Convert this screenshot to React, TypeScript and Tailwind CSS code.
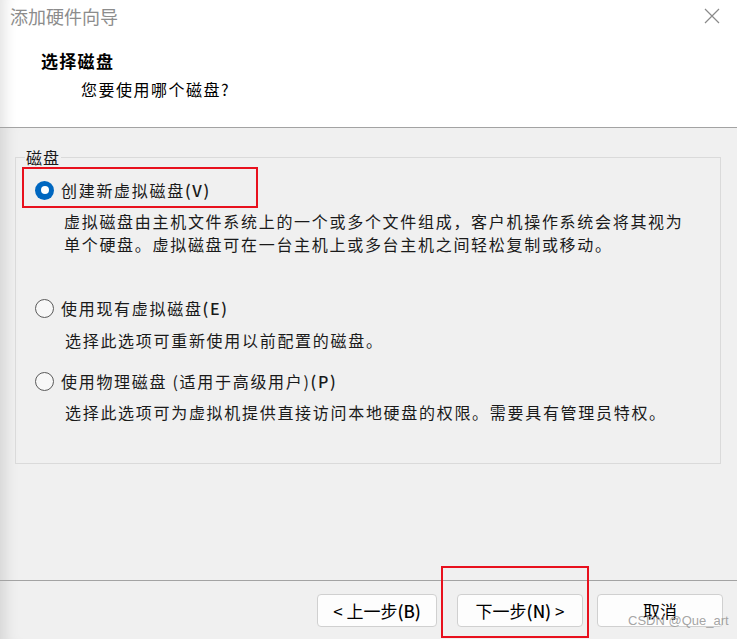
import React from "react";

const font = "font-['Noto_Sans_CJK_SC','Microsoft_YaHei',sans-serif]";

function Radio({ checked }: { checked?: boolean }) {
  if (checked) {
    return (
      <span className="w-[19px] h-[19px] rounded-full bg-[#0067c0] flex items-center justify-center shrink-0">
        <span className="w-[8px] h-[8px] rounded-full bg-white" />
      </span>
    );
  }
  return (
    <span className="w-[19px] h-[19px] rounded-full border border-[#5a5a5a] bg-[#f7f7f7] shrink-0" />
  );
}

export default function App() {
  return (
    <div
      className={`relative w-[737px] h-[639px] flex flex-col overflow-hidden bg-[#f0f0f0] text-[#1a1a1a] ${font}`}
    >
      {/* header */}
      <div className="h-[128px] bg-white border-b border-[#a3a3a3] shadow-[inset_16px_0_14px_-12px_rgba(0,0,0,0.12)]">
        <div className="flex items-center justify-between h-[30px] pl-[10px] pr-[16px] pt-[2px]">
          <span className="text-[18px] text-[#8c8c8c] leading-[24px]">添加硬件向导</span>
          <svg width="16" height="16" viewBox="0 0 16 16" className="mr-[1px]">
            <path d="M1 1 L15 15 M15 1 L1 15" stroke="#8a8a8a" strokeWidth="1.2" />
          </svg>
        </div>
        <div className="pl-[41px] pt-[19px] text-[17px] font-bold leading-[24px] tracking-[1.3px] text-black">
          选择磁盘
        </div>
        <div className="pl-[81px] pt-[4px] text-[16px] leading-[24px] tracking-[1.5px] text-black">
          您要使用哪个磁盘?
        </div>
      </div>

      {/* body */}
      <div className="flex-1 flex flex-col shadow-[inset_18px_0_16px_-14px_rgba(0,0,0,0.13)]">
        <div className="h-[452px] pt-[29px] pl-[15px] pr-[16px]">
          <div className="relative h-[307px] border border-[#dadada] pl-[19px] pt-[20px]">
            <span className="absolute left-[9px] -top-[13px] px-[1px] bg-[#f0f0f0] text-[16px] leading-[24px] tracking-[1px]">
              磁盘
            </span>

            <div className="h-[24px] flex items-center gap-[7px] text-[16px] tracking-[1.7px]">
              <Radio checked />
              <span>创建新虚拟磁盘<span className="font-medium">(V)</span></span>
            </div>
            <div className="mt-[8px] pl-[29px] text-[16px] leading-[23px] tracking-[1.7px]">
              虚拟磁盘由主机文件系统上的一个或多个文件组成，客户机操作系统会将其视为
              <br />
              单个硬盘。虚拟磁盘可在一台主机上或多台主机之间轻松复制或移动。
            </div>

            <div className="mt-[40px] h-[24px] flex items-center gap-[7px] text-[16px] tracking-[1.7px]">
              <Radio />
              <span>使用现有虚拟磁盘<span className="font-medium">(E)</span></span>
            </div>
            <div className="mt-[9px] pl-[30px] text-[16px] leading-[23px] tracking-[1.7px]">
              选择此选项可重新使用以前配置的磁盘。
            </div>

            <div className="mt-[17px] h-[24px] flex items-center gap-[7px] text-[16px] tracking-[1.7px]">
              <Radio />
              <span>使用物理磁盘 (适用于高级用户)<span className="font-medium">(P)</span></span>
            </div>
            <div className="mt-[8px] pl-[30px] text-[16px] leading-[23px] tracking-[1.7px]">
              选择此选项可为虚拟机提供直接访问本地硬盘的权限。需要具有管理员特权。
            </div>
          </div>
        </div>

        <div className="border-t border-[#a3a3a3] flex-1 flex justify-end items-start pt-[13px] pr-[14px] text-[17px]">
          <button className="w-[120px] h-[33px] rounded-[4px] border border-[#d0d0d0] bg-[#fdfdfd] text-black">
            &lt; 上一步<span className="font-medium">(B)</span>
          </button>
          <button className="ml-[20px] w-[126px] h-[33px] rounded-[4px] border border-[#d0d0d0] bg-[#fdfdfd] text-black">
            下一步<span className="font-medium">(N)</span> &gt;
          </button>
          <button className="ml-[14px] w-[126px] h-[33px] rounded-[4px] border border-[#d0d0d0] bg-[#fdfdfd] text-black">
            取消
          </button>
        </div>
      </div>

      {/* annotations */}
      <div className="absolute left-[22px] top-[167px] w-[236px] h-[41px] border-2 border-[#e8101d] pointer-events-none" />
      <div className="absolute left-[441px] top-[566px] w-[148px] h-[72px] border-2 border-[#e8101d] pointer-events-none" />
      <div className="absolute left-[628px] top-[613px] text-[13px] leading-[16px] text-[#9a9a9a]/90 font-['Liberation_Sans',sans-serif] pointer-events-none">
        CSDN @Que_art
      </div>
    </div>
  );
}
